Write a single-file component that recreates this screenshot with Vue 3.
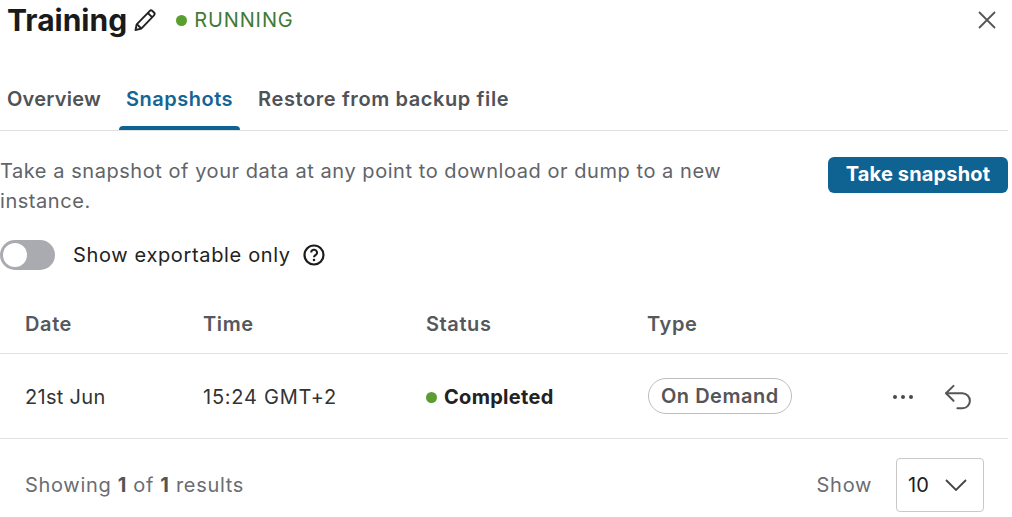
<template>
  <div class="panel">
    <header class="head">
      <h1>Training</h1>
      <svg class="pencil" width="24" height="24" viewBox="0 0 24 24" fill="none" stroke="#222" stroke-width="1.900" stroke-linejoin="round">
        <path d="M2.500 22l1.200-5.700L16.600 3.100a2 2 0 0 1 2.800-.1l1.600 1.500a2 2 0 0 1 0 2.800L8.300 20.600z" />
        <path d="M14.800 5l4.500 4.400M3.900 16.200l4.300 4.300" />
      </svg>
      <span class="running"><i class="dot"></i>RUNNING</span>
      <svg class="close" width="20" height="20" viewBox="0 0 20 20" stroke="#555" stroke-width="1.800">
        <path d="M2 2l16 16M18 2L2 18" />
      </svg>
    </header>

    <nav class="tabs">
      <a v-for="tab in tabs" :key="tab" class="tab" :class="{ active: tab === 'Snapshots' }">{{ tab }}</a>
    </nav>

    <section class="intro">
      <p>Take a snapshot of your data at any point to download or dump to a new instance.</p>
      <button class="primary">Take snapshot</button>
    </section>

    <div class="filter">
      <span class="switch"><span class="knob"></span></span>
      <span class="filter-label">Show exportable only</span>
      <svg width="22" height="22" viewBox="0 0 22 22" fill="none" stroke="#1c1c1c" stroke-width="2.200">
        <circle cx="11" cy="11" r="9.500" />
        <path d="M8.200 8.600a2.900 2.900 0 1 1 4.300 2.500c-1 .6-1.500 1.100-1.500 2.200" stroke-width="2" />
        <circle cx="11" cy="16" r=".6" stroke-width="1.400" />
      </svg>
    </div>

    <div class="grid thead">
      <span>Date</span>
      <span>Time</span>
      <span class="status-head">Status</span>
      <span>Type</span>
    </div>

    <div class="grid row">
      <span class="date">21st Jun</span>
      <span class="time">15:24 GMT+2</span>
      <span class="status"><i class="dot"></i>Completed</span>
      <span class="pill-cell"><span class="pill">On Demand</span></span>
      <span class="actions">
        <svg width="22" height="6" viewBox="0 0 22 6" fill="#4a4a4a">
          <circle cx="3" cy="3" r="2" />
          <circle cx="11" cy="3" r="2" />
          <circle cx="19" cy="3" r="2" />
        </svg>
        <svg width="31" height="31" viewBox="0 0 28 28" fill="none" stroke="#555" stroke-width="1.800" stroke-linecap="round" stroke-linejoin="round">
          <path d="M9.500 3.500L2.700 10.200l6.800 6.800" />
          <path d="M3 10.200h14.500a6.800 6.800 0 0 1 0 13.600h-4.500" />
        </svg>
      </span>
    </div>

    <footer class="foot">
      <span>Showing <b>1</b> of <b>1</b> results</span>
      <span class="pager">
        <span>Show</span>
        <span class="select">
          10
          <svg width="22" height="12" viewBox="0 0 22 12" fill="none" stroke="#444" stroke-width="1.800">
            <path d="M1 1l10 10L21 1" />
          </svg>
        </span>
      </span>
    </footer>
  </div>
</template>

<script setup>
const tabs = ['Overview', 'Snapshots', 'Restore from backup file']
</script>

<style>
html,
body {
  background: #fff;
}
</style>

<style scoped>
.panel {
  width: 1008px;
  height: 517px;
  overflow: hidden;
  font-family: 'Inter', 'Liberation Sans', sans-serif;
  letter-spacing: .6px;
  color: #222;
}

.head {
  display: flex;
  align-items: center;
  height: 40px;
  margin-bottom: 1px;
  padding-left: 7px;
}

.head h1 {
  margin: 0;
  font-size: 30px;
  font-weight: 700;
  letter-spacing: 0;
  color: #1a1a1a;
}

.pencil {
  margin-left: 6px;
}

.running {
  display: flex;
  align-items: center;
  margin-left: 19px;
  color: #3f7a36;
  font-size: 20px;
  letter-spacing: .9px;
}

.dot {
  display: inline-block;
  width: 11px;
  height: 11px;
  margin-right: 7px;
  border-radius: 50%;
  background: #5a9e2f;
}

.close {
  margin-left: auto;
  margin-right: 11px;
}

.tabs {
  display: flex;
  height: 90px;
  align-items: flex-end;
  box-sizing: border-box;
  border-bottom: 1px solid #e0e0e0;
  padding-left: 7px;
}

.tab {
  position: relative;
  height: 43px;
  margin-right: 25px;
  font-size: 20px;
  font-weight: 600;
  color: #4f5257;
}

.tab:first-child {
  letter-spacing: .25px;
}

.tab.active {
  letter-spacing: .5px;
  color: #146494;
}

.tab.active::after {
  content: '';
  position: absolute;
  left: -7px;
  right: -7px;
  bottom: 0;
  height: 4px;
  border-radius: 4px 4px 0 0;
  background: #0f6393;
}

.intro {
  display: flex;
  justify-content: space-between;
  align-items: flex-start;
  margin-top: 25px;
}

.intro p {
  width: 760px;
  margin: 0;
  font-size: 20px;
  line-height: 30px;
  letter-spacing: .55px;
  color: #616469;
}

.primary {
  width: 180px;
  height: 36px;
  margin-top: 1px;
  padding: 0 0 2px;
  border: 0;
  border-radius: 6px;
  background: #0f6393;
  color: #fff;
  font-family: inherit;
  font-size: 20px;
  font-weight: 700;
  letter-spacing: .15px;
}

.filter {
  display: flex;
  align-items: center;
  margin-top: 24px;
}

.switch {
  display: block;
  box-sizing: border-box;
  width: 55px;
  height: 30px;
  padding: 3px;
  border-radius: 15px;
  background: #a9abb0;
}

.knob {
  display: block;
  width: 24px;
  height: 24px;
  border-radius: 50%;
  background: #fff;
}

.filter-label {
  margin: 0 12px 0 18px;
  font-size: 20px;
  letter-spacing: .65px;
  color: #222;
}

.grid {
  display: grid;
  grid-template-columns: 178px 222px 222px 1fr auto;
  align-items: center;
  padding-left: 25px;
  font-size: 20px;
  border-bottom: 1px solid #e0e0e0;
}

.thead {
  height: 84px;
  padding-top: 24px;
  box-sizing: border-box;
  font-weight: 600;
  color: #55585d;
}

.status-head {
  padding-left: 1px;
}

.row {
  height: 85px;
  box-sizing: border-box;
  padding-top: 2px;
  color: #333;
}

.date {
  letter-spacing: .3px;
}

.time {
  letter-spacing: .75px;
}

.status {
  display: flex;
  align-items: center;
  padding-left: 1px;
  letter-spacing: .3px;
  font-weight: 700;
  color: #222;
}

.pill-cell {
  margin-bottom: 2px;
}

.pill {
  display: inline-block;
  margin-left: 1px;
  padding: 3px 12px;
  border: 1px solid #bdbdbd;
  border-radius: 18px;
  font-weight: 600;
  letter-spacing: .5px;
  line-height: 28px;
  color: #555;
}

.actions {
  display: flex;
  align-items: center;
  gap: 29px;
  padding-right: 34px;
}

.foot {
  display: flex;
  justify-content: space-between;
  align-items: center;
  height: 92px;
  padding: 0 24px 0 25px;
  font-size: 20px;
  letter-spacing: .68px;
  color: #6a6d72;
}

.foot b {
  font-weight: 700;
  color: #555;
}

.pager {
  display: flex;
  align-items: center;
  gap: 24px;
}

.select {
  display: flex;
  justify-content: space-between;
  align-items: center;
  box-sizing: border-box;
  width: 88px;
  height: 54px;
  padding: 0 16px 0 11px;
  border: 1px solid #c9c9c9;
  border-radius: 4px;
  letter-spacing: 0;
  color: #1c1c1c;
}
</style>
